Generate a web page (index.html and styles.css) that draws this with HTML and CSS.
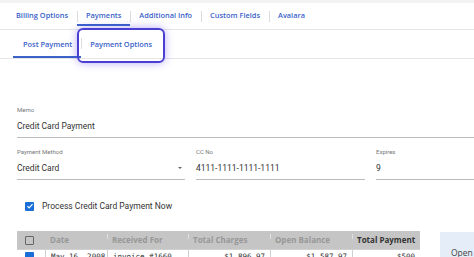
FILE: index.html
```html
<!DOCTYPE html>
<html lang="en">
<head>
    <meta charset="UTF-8">
    <meta name="viewport" content="width=device-width, initial-scale=1.0">
    <title>Payments</title>
    <link rel="stylesheet" href="styles.css">
</head>
<body>
    <div class="top-strip"></div>

    <nav class="tabs">
        <a class="tab">Billing Options</a>
        <a class="tab active">Payments</a>
        <a class="tab">Additional Info</a>
        <a class="tab">Custom Fields</a>
        <a class="tab">Avalara</a>
    </nav>

    <nav class="subtabs">
        <a class="subtab active">Post Payment</a>
        <a class="subtab highlight">Payment Options</a>
    </nav>

    <main class="content">
        <div class="field field-wide">
            <label class="field-label">Memo</label>
            <div class="field-value">Credit Card Payment</div>
        </div>

        <div class="field-row">
            <div class="field">
                <label class="field-label">Payment Method</label>
                <div class="field-value select">
                    <span>Credit Card</span>
                    <span class="caret"></span>
                </div>
            </div>
            <div class="field">
                <label class="field-label">CC No</label>
                <div class="field-value">4111-1111-1111-1111</div>
            </div>
            <div class="field">
                <label class="field-label">Expires</label>
                <div class="field-value">9</div>
            </div>
        </div>

        <label class="check-line">
            <span class="checkbox checked">
                <svg viewBox="0 0 10 10" width="8" height="8"><path d="M1.8 5.2l2.1 2.1 4.3-4.6" fill="none" stroke="white" stroke-width="1.5"/></svg>
            </span>
            Process Credit Card Payment Now
        </label>

        <div class="bottom">
            <div class="grid">
                <div class="grid-head">
                    <div class="cell cell-check"><span class="checkbox empty"></span></div>
                    <div class="cell c-date">Date</div>
                    <div class="cell c-for">Received For</div>
                    <div class="cell c-charges">Total Charges</div>
                    <div class="cell c-open">Open Balance</div>
                    <div class="cell c-pay strong">Total Payment</div>
                </div>
                <div class="grid-row">
                    <div class="cell cell-check"><span class="checkbox checked"></span></div>
                    <div class="cell c-date">May 16, 2008</div>
                    <div class="cell c-for">invoice #1660</div>
                    <div class="cell c-charges num">$1,896.97</div>
                    <div class="cell c-open num">$1,587.97</div>
                    <div class="cell c-pay num">$500</div>
                </div>
            </div>
            <button class="open-button">Open</button>
        </div>
    </main>
</body>
</html>
```

FILE: styles.css
```css
body {
    margin: 0;
    padding: 0;
    width: 474px;
    height: 257px;
    overflow: hidden;
    background: white;
    font-family: Roboto, 'Liberation Sans', sans-serif;
    color: #333;
}

.top-strip {
    height: 3px;
    background: #f3f3f3;
}

/* main tabs */
.tabs {
    display: flex;
    align-items: flex-end;
    padding-left: 7px;
    padding-bottom: 3px;
    border-bottom: 1px solid #e6e6e6;
    width: 467px;
    overflow: hidden;
}

.tab {
    position: relative;
    padding: 0 9px;
    height: 23px;
    line-height: 24px;
    font-family: 'Open Sans', sans-serif;
    font-size: 7.4px;
    font-weight: 600;
    color: #3a62c9;
    box-sizing: border-box;
    white-space: nowrap;
}

.tab + .tab::before,
.subtab + .subtab::before {
    content: "";
    position: absolute;
    left: 0;
    top: 8px;
    height: 11px;
    border-left: 1px solid #dcdcdc;
}

.tab.active {
    border-bottom: 2px solid #3a62c9;
}

/* sub tabs */
.subtabs {
    display: flex;
    padding-left: 13px;
    border-bottom: 1px solid #e6e6e6;
    width: 461px;
}

.subtab {
    position: relative;
    padding: 0 9px 0 10px;
    height: 28px;
    line-height: 28px;
    font-family: 'Open Sans', sans-serif;
    font-size: 7.4px;
    font-weight: 600;
    color: #3a62c9;
    box-sizing: border-box;
    white-space: nowrap;
}

.subtab.active {
    border-bottom: 2px solid #3a62c9;
    margin-bottom: -1px;
}

.subtab.highlight {
    padding: 0 9px;
}

.subtab.highlight::after {
    content: "";
    position: absolute;
    left: -4px;
    right: -4px;
    top: -2px;
    bottom: -5px;
    border: 2px solid #4a3fd2;
    border-radius: 6px;
    box-shadow: 0 0 8px rgba(90, 70, 230, 0.45);
}

/* form */
.content {
    padding: 47px 0 0 17px;
    width: 457px;
    overflow: hidden;
}

.field {
    display: flex;
    flex-direction: column;
    border-bottom: 1px solid #bcbcbc;
}

.field-wide {
    width: 560px;
}

.field-label {
    font-size: 6px;
    color: #777;
    line-height: 8px;
}

.field-value {
    font-size: 8.5px;
    line-height: 12px;
    padding: 6px 0 5px;
    color: #333;
}

.field-row {
    display: grid;
    grid-template-columns: 168px 169px 169px;
    gap: 11px;
    margin-top: 10px;
    width: 560px;
}

.select {
    display: flex;
    justify-content: space-between;
    align-items: center;
}

.caret {
    width: 0;
    height: 0;
    margin-right: 3px;
    border-left: 2px solid transparent;
    border-right: 2px solid transparent;
    border-top: 2px solid #666;
}

.check-line {
    display: flex;
    align-items: center;
    gap: 8px;
    margin: 21px 0 0 8px;
    font-size: 8.5px;
    color: #333;
}

.checkbox {
    display: inline-flex;
    align-items: center;
    justify-content: center;
    width: 9px;
    height: 9px;
    border-radius: 1px;
    box-sizing: border-box;
}

.checkbox.checked {
    background: #1a6fd6;
}

.checkbox.empty {
    border: 1.5px solid #666;
}

/* grid */
.bottom {
    display: flex;
    align-items: flex-start;
    gap: 20px;
    margin-top: 20px;
}

.grid {
    width: 403px;
    flex-shrink: 0;
}

.grid-head,
.grid-row {
    display: grid;
    grid-template-columns: 28px 62px 81px 82px 82px 68px;
}

.grid-head {
    background: #c5c5c5;
    height: 18px;
}

.grid-head .cell {
    position: relative;
    font-family: 'Open Sans', sans-serif;
    font-size: 8px;
    font-weight: 700;
    color: #979797;
    line-height: 18px;
}

.grid-head .cell + .cell + .cell::before {
    content: "";
    position: absolute;
    left: 0;
    top: 3px;
    height: 5px;
    border-left: 1px solid #e0e0e0;
}

.grid-head .strong {
    color: #333;
}

.cell {
    padding: 0 5px;
    box-sizing: border-box;
    white-space: nowrap;
    overflow: hidden;
}

.cell-check {
    display: flex;
    align-items: center;
    padding-left: 8px;
}

.grid-row {
    height: 20px;
}

.grid-row .cell {
    border-left: 1px solid #d0d0d0;
    border-top: 1px solid #d0d0d0;
    font-family: 'DejaVu Sans Mono', monospace;
    font-size: 7.5px;
    line-height: 14px;
    color: #333;
}

.grid-row .cell-check {
    border-left: none;
    align-items: flex-start;
    padding-top: 2px;
}

.num {
    text-align: right;
}

.open-button {
    width: 60px;
    height: 30px;
    margin-top: 1px;
    padding: 10px 0 0 11px;
    border: none;
    background: #e5eef8;
    font-family: 'Open Sans', sans-serif;
    font-size: 8.5px;
    color: #444;
    text-align: left;
}
```
